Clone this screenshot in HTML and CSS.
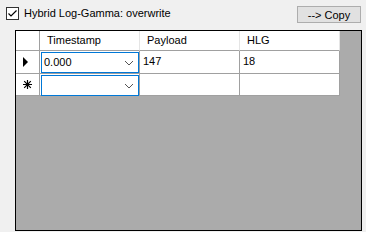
FILE: index.html
```html
<!DOCTYPE html>
<html lang="en">
<head>
    <meta charset="UTF-8">
    <title>Hybrid Log-Gamma</title>
    <link rel="stylesheet" href="styles.css">
</head>
<body>
    <div class="form">
        <div class="toolbar">
            <label class="check">
                <span class="box">
                    <svg width="11" height="11" viewBox="0 0 11 11"><path d="M1.5 5.5 L4 8 L9.5 2.5" fill="none" stroke="#000" stroke-width="1.2"/></svg>
                </span>
                <span class="check-text">Hybrid Log-Gamma: overwrite</span>
            </label>
            <button class="copy">--&gt; Copy</button>
        </div>
        <div class="grid">
            <div class="table">
                <div class="hdr corner"></div>
                <div class="hdr">Timestamp</div>
                <div class="hdr">Payload</div>
                <div class="hdr last">HLG</div>

                <div class="rowhdr">
                    <svg width="5" height="10" viewBox="0 0 5 10"><path d="M0 0 L5 5 L0 10 Z" fill="#000"/></svg>
                </div>
                <div class="cell combo-cell">
                    <div class="combo"><span>0.000</span><svg width="10" height="6" viewBox="0 0 10 6"><path d="M1 1 L5 5 L9 1" fill="none" stroke="#555" stroke-width="1"/></svg></div>
                </div>
                <div class="cell">147</div>
                <div class="cell">18</div>

                <div class="rowhdr">
                    <svg width="9" height="9" viewBox="0 0 9 9"><path d="M4.5 0 V9 M0 4.5 H9 M1.2 1.2 L7.8 7.8 M7.8 1.2 L1.2 7.8" stroke="#000" stroke-width="1.2"/></svg>
                </div>
                <div class="cell combo-cell">
                    <div class="combo"><span></span><svg width="10" height="6" viewBox="0 0 10 6"><path d="M1 1 L5 5 L9 1" fill="none" stroke="#555" stroke-width="1"/></svg></div>
                </div>
                <div class="cell"></div>
                <div class="cell"></div>
            </div>
        </div>
    </div>
</body>
</html>
```
FILE: styles.css
```css
* {
    margin: 0;
    padding: 0;
    box-sizing: border-box;
}

body {
    width: 366px;
    height: 232px;
    background-color: #f0f0f0;
    font-family: "Liberation Sans", Arial, sans-serif;
    font-size: 11px;
    color: #000;
    overflow: hidden;
}

.toolbar {
    height: 30px;
    display: flex;
    justify-content: space-between;
    align-items: flex-start;
    padding: 7px 5px 0 6px;
}

.check {
    display: flex;
    align-items: center;
    gap: 5px;
    height: 13px;
}

.box {
    width: 13px;
    height: 13px;
    border: 1px solid #333;
    background-color: #fff;
    display: flex;
    align-items: center;
    justify-content: center;
}

.check-text {
    line-height: 13px;
}

.copy {
    width: 64px;
    height: 17px;
    margin-top: -1px;
    border: 1px solid #adadad;
    background-color: #e1e1e1;
    font-family: "Liberation Sans", Arial, sans-serif;
    font-size: 11px;
    color: #000;
}

.grid {
    margin-left: 15px;
    width: 347px;
    height: 201px;
    border: 1px solid #000;
    background-color: #ababab;
}

.table {
    display: grid;
    grid-template-columns: 24px 100px 100px 100px;
    grid-template-rows: 20px 23px 22px;
    width: 324px;
}

.hdr {
    background-color: #fff;
    border-right: 1px solid #e5e5e5;
    border-bottom: 1px solid #a0a0a0;
    padding-left: 7px;
    line-height: 19px;
}

.hdr.corner {
    border-right: 1px solid #a0a0a0;
}

.hdr.last {
    border-right: 1px solid #e5e5e5;
}

.rowhdr {
    background-color: #fff;
    border-right: 1px solid #a0a0a0;
    border-bottom: 1px solid #a0a0a0;
    display: flex;
    align-items: center;
    padding-left: 7px;
}

.rowhdr svg {
    display: block;
}

.cell {
    background-color: #fff;
    border-right: 1px solid #a0a0a0;
    border-bottom: 1px solid #a0a0a0;
    padding-left: 3px;
    line-height: 21px;
}

.combo-cell {
    padding: 1px 0 0 1px;
}

.combo {
    height: 21px;
    width: 98px;
    border: 1px solid #0078d7;
    background-color: #fff;
    display: flex;
    align-items: center;
    justify-content: space-between;
    padding: 0 4px 0 2px;
}

.combo svg {
    display: block;
}
```
